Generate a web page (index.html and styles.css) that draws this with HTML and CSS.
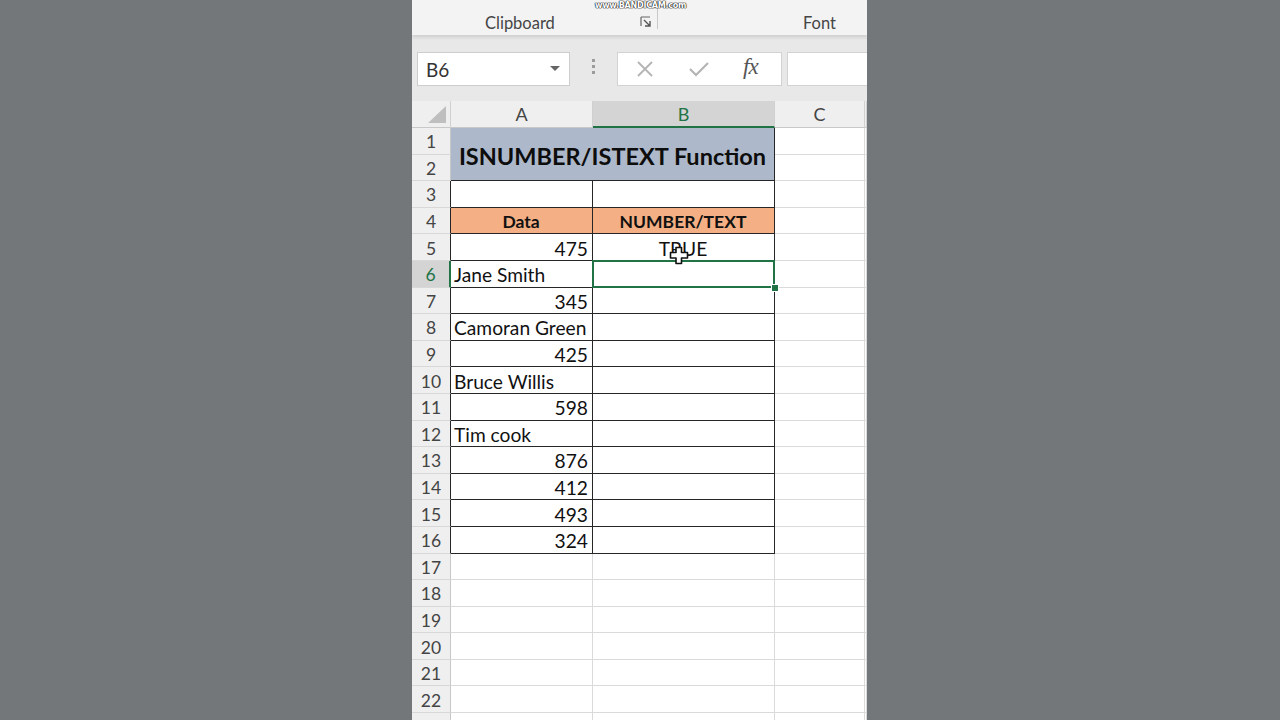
FILE: index.html
```html
<!DOCTYPE html>
<html>
<head>
<meta charset="utf-8">
<link rel="stylesheet" href="styles.css">
</head>
<body>
<div class="stage">
  <div class="app">
    <div class="ribbon">
      <div class="group g-clip">
        <span class="glabel">Clipboard</span>
        <svg class="launcher" width="13" height="12" viewBox="0 0 13 12">
          <path d="M1 1 H10 M1 1 V10" stroke="#666" stroke-width="1.2" fill="none"/>
          <path d="M4 4 L10 10 M10 5 V10 H5" stroke="#555" stroke-width="1.4" fill="none"/>
        </svg>
      </div>
      <div class="gsep"></div>
      <div class="group g-font"><span class="glabel">Font</span></div>
      <div class="watermark">www.BANDICAM.com</div>
    </div>

    <div class="fbar">
      <div class="namebox">
        <span class="nbtext">B6</span>
        <svg class="nbdrop" width="10" height="6" viewBox="0 0 10 6"><path d="M0 0 H10 L5 5 Z" fill="#666"/></svg>
      </div>
      <div class="grip"><i></i><i></i><i></i></div>
      <div class="fbtns">
        <svg class="fb-x" width="18" height="18" viewBox="0 0 18 18"><path d="M2 2 L16 16 M16 2 L2 16" stroke="#b4b4b4" stroke-width="1.8"/></svg>
        <svg class="fb-ok" width="22" height="18" viewBox="0 0 22 18"><path d="M2 9 L8 15 L20 3" stroke="#b4b4b4" stroke-width="2.2" fill="none"/></svg>
        <span class="fb-fx">fx</span>
      </div>
      <div class="finput"></div>
    </div>

    <div class="sheet">
      <div class="ch corner"><span class="tri"></span></div>
      <div class="ch">A</div>
      <div class="ch chsel">B</div>
      <div class="ch">C</div>
      <div class="ch"></div>

      <div class="rh">1</div>
      <div class="title">ISNUMBER/ISTEXT Function</div>
      <div class="c"></div>
      <div class="c"></div>

      <div class="rh">2</div>
      <div class="c"></div>
      <div class="c"></div>

      <div class="rh rht">3</div>
      <div class="c t"></div><div class="c t"></div><div class="c"></div><div class="c"></div>

      <div class="rh rht">4</div>
      <div class="c t hd">Data</div><div class="c t hd">NUMBER/TEXT</div><div class="c"></div><div class="c"></div>

      <div class="rh rht">5</div>
      <div class="c t num">475</div><div class="c t ctr">TRUE</div><div class="c"></div><div class="c"></div>

      <div class="rh rhsel">6</div>
      <div class="c t">Jane Smith</div><div class="c t sel"></div><div class="c"></div><div class="c"></div>

      <div class="rh rht">7</div>
      <div class="c t num">345</div><div class="c t"></div><div class="c"></div><div class="c"></div>

      <div class="rh rht">8</div>
      <div class="c t">Camoran Green</div><div class="c t"></div><div class="c"></div><div class="c"></div>

      <div class="rh rht">9</div>
      <div class="c t num">425</div><div class="c t"></div><div class="c"></div><div class="c"></div>

      <div class="rh rht">10</div>
      <div class="c t">Bruce Willis</div><div class="c t"></div><div class="c"></div><div class="c"></div>

      <div class="rh rht">11</div>
      <div class="c t num">598</div><div class="c t"></div><div class="c"></div><div class="c"></div>

      <div class="rh rht">12</div>
      <div class="c t">Tim cook</div><div class="c t"></div><div class="c"></div><div class="c"></div>

      <div class="rh rht">13</div>
      <div class="c t num">876</div><div class="c t"></div><div class="c"></div><div class="c"></div>

      <div class="rh rht">14</div>
      <div class="c t num">412</div><div class="c t"></div><div class="c"></div><div class="c"></div>

      <div class="rh rht">15</div>
      <div class="c t num">493</div><div class="c t"></div><div class="c"></div><div class="c"></div>

      <div class="rh rht">16</div>
      <div class="c t num">324</div><div class="c t"></div><div class="c"></div><div class="c"></div>

      <div class="rh">17</div>
      <div class="c"></div><div class="c"></div><div class="c"></div><div class="c"></div>
      <div class="rh">18</div>
      <div class="c"></div><div class="c"></div><div class="c"></div><div class="c"></div>
      <div class="rh">19</div>
      <div class="c"></div><div class="c"></div><div class="c"></div><div class="c"></div>
      <div class="rh">20</div>
      <div class="c"></div><div class="c"></div><div class="c"></div><div class="c"></div>
      <div class="rh">21</div>
      <div class="c"></div><div class="c"></div><div class="c"></div><div class="c"></div>
      <div class="rh">22</div>
      <div class="c"></div><div class="c"></div><div class="c"></div><div class="c"></div>
      <div class="rh"></div>
      <div class="c"></div><div class="c"></div><div class="c"></div><div class="c"></div>
    </div>

    <svg class="cursor" width="20" height="19" viewBox="0 0 20 19">
      <path d="M7 1.5 H12.5 V6.5 H18.5 V12 H12.5 V17.5 H7 V12 H1.5 V6.5 H7 Z" fill="#fff" stroke="#111" stroke-width="1.6" stroke-linejoin="round"/>
    </svg>
  </div>
</div>
</body>
</html>
```

FILE: styles.css
```css
html, body {
  margin: 0;
  padding: 0;
}
body {
  background: #74777a;
  font-family: Lato, "Open Sans", sans-serif;
}
.stage {
  display: flex;
  justify-content: flex-start;
  padding-left: 412px;
  height: 720px;
  overflow: hidden;
}
.app {
  position: relative;
  width: 455px;
  height: 720px;
  background: #fff;
  display: flex;
  flex-direction: column;
  overflow: hidden;
}

/* ribbon */
.ribbon {
  position: relative;
  z-index: 2;
  height: 35px;
  flex: none;
  background: #f3f3f3;
  display: flex;
  align-items: flex-start;
  box-shadow: 0 2px 4px rgba(0,0,0,0.13);
}
.group {
  display: flex;
  align-items: center;
  height: 22px;
  margin-top: 12px;
}
.g-clip {
  width: 245px;
  box-sizing: border-box;
  padding-left: 73px;
  padding-right: 4px;
  justify-content: space-between;
}
.glabel {
  font-size: 16.5px;
  color: #454545;
  line-height: 22px;
}
.launcher {
  margin-top: -2px;
}
.gsep {
  width: 1px;
  height: 29px;
  background: #c9c9c9;
}
.g-font {
  margin-left: 145px;
}
.watermark {
  position: absolute;
  left: 183px;
  top: 0;
  font-family: "DejaVu Sans Condensed", "DejaVu Sans", sans-serif;
  font-size: 9px;
  line-height: 10px;
  font-weight: bold;
  letter-spacing: -0.3px;
  color: #fff;
  text-shadow: 0 0 1px #222, 0 0 1px #222, 0 0 1px #222, 0 0 1px #222;
}

/* formula bar */
.fbar {
  height: 66px;
  flex: none;
  background: #e8e8e8;
  display: flex;
  align-items: flex-start;
  padding-top: 17px;
  box-sizing: border-box;
}
.namebox {
  margin-left: 5px;
  width: 153px;
  height: 34px;
  box-sizing: border-box;
  background: #fff;
  border: 1px solid #cdcdcd;
  display: flex;
  align-items: center;
  justify-content: space-between;
  padding: 0 9px 0 8px;
}
.nbtext {
  font-size: 19px;
  color: #333;
}
.grip {
  width: 4px;
  margin-left: 22px;
  margin-right: 21px;
  padding-top: 7px;
  display: flex;
  flex-direction: column;
  gap: 3px;
}
.grip i {
  display: block;
  width: 3px;
  height: 3px;
  background: #9c9c9c;
}
.fbtns {
  width: 165px;
  height: 34px;
  box-sizing: border-box;
  background: #fff;
  border: 1px solid #d2d2d2;
  display: flex;
  align-items: center;
  padding-left: 18px;
}
.fb-x { margin-right: 34px; }
.fb-ok { margin-right: 33px; }
.fb-fx {
  font-family: "Liberation Serif", serif;
  font-style: italic;
  font-size: 23px;
  color: #555;
  letter-spacing: -1px;
  margin-top: -4px;
}
.finput {
  margin-left: 5px;
  flex: 1;
  height: 34px;
  background: #fff;
  border: 1px solid #d2d2d2;
  border-right: none;
  box-sizing: border-box;
}

/* sheet */
.sheet {
  flex: 1;
  display: grid;
  grid-template-columns: 39px 142px 182px 90px 2px;
  grid-template-rows: 27px repeat(23, 26.6px);
  overflow: hidden;
  color: #111;
  font-size: 19.2px;
}
.sheet > div {
  box-sizing: border-box;
  border-right: 1px solid #dadada;
  border-bottom: 1px solid #dadada;
  display: flex;
  align-items: center;
  min-width: 0;
  white-space: nowrap;
  overflow: visible;
  padding-top: 2px;
}
.sheet > .ch {
  background: #efefef;
  justify-content: center;
  font-size: 18px;
  color: #444;
  border-right-color: #d0d0d0;
  border-bottom-color: #c8c8c8;
  padding-top: 0;
}
.corner {
  position: relative;
}
.tri {
  position: absolute;
  right: 4px;
  bottom: 4px;
  width: 0;
  height: 0;
  border-left: 18px solid transparent;
  border-bottom: 17px solid #bfbfbf;
}
.sheet > .chsel {
  background: #d4d4d4;
  color: #217346;
  border-bottom: 2px solid #217346;
}
.sheet > .rh {
  background: #efefef;
  justify-content: center;
  font-size: 17.5px;
  color: #444;
  border-right-color: #c8c8c8;
  border-bottom-color: #d8d8d8;
}
.sheet > .rht {
  border-right-color: #262626;
}
.sheet > .rhsel {
  background: #d4d4d4;
  color: #217346;
  border-right: 2px solid #217346;
}
.sheet > .title {
  grid-column: 2 / 4;
  grid-row: 2 / 4;
  background: #adb9ca;
  justify-content: center;
  font-weight: 700;
  font-size: 23.5px;
  color: #0d0d0d;
  border-right-color: #262626;
  border-bottom-color: #262626;
  padding-top: 3px;
}
.sheet > .t {
  border-right-color: #262626;
  border-bottom-color: #262626;
  padding-left: 3px;
  padding-right: 4px;
}
.sheet > .hd {
  background: #f4b084;
  font-weight: 700;
  font-size: 17.5px;
  justify-content: center;
}
.num {
  justify-content: flex-end;
}
.ctr {
  justify-content: center;
}
.sel {
  position: relative;
}
.sel::after {
  content: "";
  position: absolute;
  left: -1px;
  top: -1px;
  right: -1px;
  bottom: -1px;
  border: 2px solid #217346;
}
.sel::before {
  content: "";
  position: absolute;
  right: -5px;
  bottom: -5px;
  width: 6px;
  height: 6px;
  background: #217346;
  border: 1px solid #fff;
  z-index: 1;
}
.cursor {
  position: absolute;
  left: 257px;
  top: 246px;
  z-index: 5;
}
```
